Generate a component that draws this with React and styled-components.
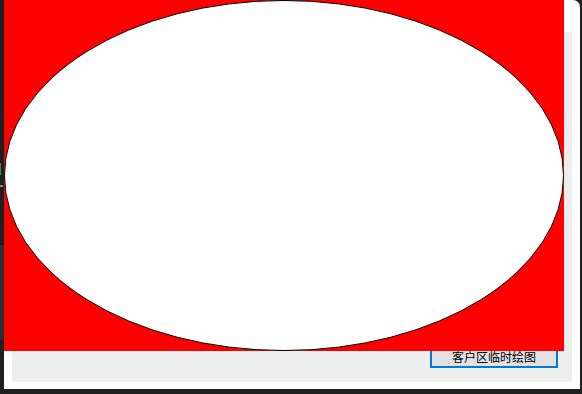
import React from 'react';
import styled, { createGlobalStyle } from 'styled-components';

const GlobalStyle = createGlobalStyle`
  html, body {
    margin: 0;
    padding: 0;
    background: #1f1f1f;
    overflow: hidden;
  }
  body {
    font-family: "Noto Sans CJK SC", "Noto Sans", sans-serif;
  }
`;

const Desktop = styled.div`
  width: 582px;
  height: 394px;
  display: flex;
  background: #1f1f1f;
`;

const EditorEdge = styled.div`
  width: 4px;
  height: 389px;
  display: flex;
  flex-direction: column;
  background: #1f1f1f;
`;

const EdgeMark = styled.div`
  height: ${p => p.h}px;
  margin-top: ${p => p.top}px;
  width: ${p => p.w || 2}px;
  background: ${p => p.color};
`;

const Window = styled.div`
  position: relative;
  width: 576px;
  height: 389px;
  background: #ffffff;
  border-top-right-radius: 7px;
  box-sizing: border-box;
  padding: 32px 8px 7px 8px;
  display: flex;
`;

const ClientArea = styled.div`
  flex: 1;
  background: #eeeeee;
  display: flex;
  align-items: flex-end;
  justify-content: flex-end;
  padding: 0 14px 14px 0;
`;

const Button = styled.button`
  width: 128px;
  height: 23px;
  box-sizing: border-box;
  border: 2px solid #0078d7;
  background: #e1e1e1;
  font-family: "Noto Sans CJK SC", "Noto Sans", sans-serif;
  font-size: 12px;
  color: #000;
  padding: 0;
  line-height: 19px;
  cursor: default;
`;

const Canvas = styled.svg`
  position: absolute;
  left: 0;
  top: 0;
`;

export default function App() {
  return (
    <>
      <GlobalStyle />
      <Desktop>
        <EditorEdge>
          <EdgeMark top={163} h={12} w={1} color="#4e8a3e" />
          <EdgeMark top={10} h={2} w={3} color="#8a8a8a" />
          <EdgeMark top={58} h={95} w={4} color="#2d2d2d" />
        </EditorEdge>
        <Window>
          <ClientArea>
            <Button>客户区临时绘图</Button>
          </ClientArea>
          <Canvas width="560" height="351" viewBox="0 0 560 351">
            <rect x="0" y="0" width="560" height="351" fill="#ff0000" />
            <ellipse cx="280" cy="175.5" rx="279.5" ry="175" fill="#ffffff" stroke="#000" strokeWidth="1" />
          </Canvas>
        </Window>
      </Desktop>
    </>
  );
}
